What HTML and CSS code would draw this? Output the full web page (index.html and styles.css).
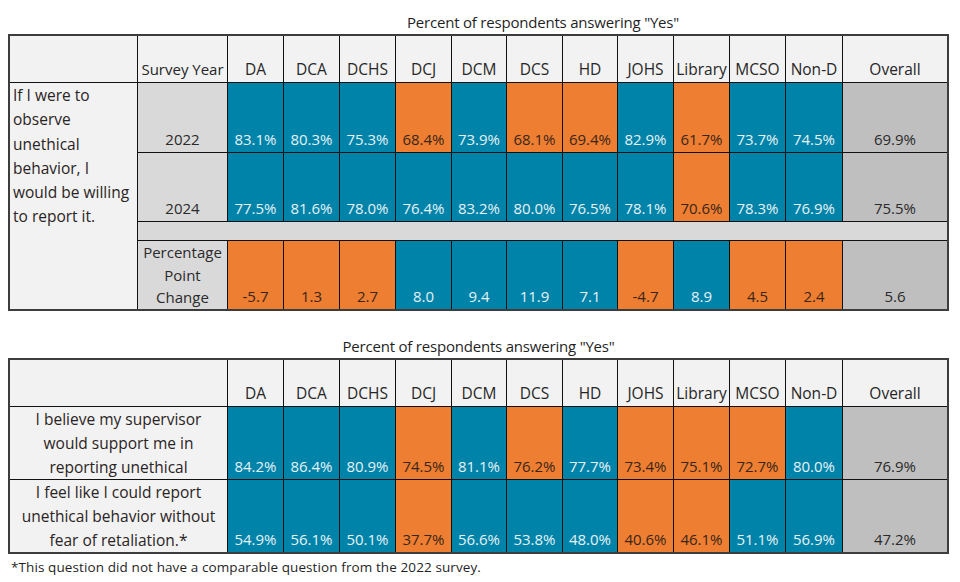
FILE: index.html
```html
<!DOCTYPE html>
<html lang="en">
<head>
<meta charset="utf-8">
<title>Survey results</title>
<link rel="stylesheet" href="styles.css">
</head>
<body>
<div class="page">
  <div class="title title-one">Percent of respondents answering "Yes"</div>
  <div class="grid grid-one">
    <div class="c hd"></div>
    <div class="c hd sy">Survey Year</div>
    <div class="c hd">DA</div>
    <div class="c hd">DCA</div>
    <div class="c hd">DCHS</div>
    <div class="c hd">DCJ</div>
    <div class="c hd">DCM</div>
    <div class="c hd">DCS</div>
    <div class="c hd">HD</div>
    <div class="c hd">JOHS</div>
    <div class="c hd">Library</div>
    <div class="c hd">MCSO</div>
    <div class="c hd">Non-D</div>
    <div class="c hd">Overall</div>

    <div class="c q q-one">If I were to<br>observe<br>unethical<br>behavior, I<br>would be willing<br>to report it.</div>
    <div class="c yr">2022</div>
    <div class="c b">83.1%</div>
    <div class="c b">80.3%</div>
    <div class="c b">75.3%</div>
    <div class="c o">68.4%</div>
    <div class="c b">73.9%</div>
    <div class="c o">68.1%</div>
    <div class="c o">69.4%</div>
    <div class="c b">82.9%</div>
    <div class="c o">61.7%</div>
    <div class="c b">73.7%</div>
    <div class="c b">74.5%</div>
    <div class="c ov">69.9%</div>

    <div class="c yr">2024</div>
    <div class="c b">77.5%</div>
    <div class="c b">81.6%</div>
    <div class="c b">78.0%</div>
    <div class="c b">76.4%</div>
    <div class="c b">83.2%</div>
    <div class="c b">80.0%</div>
    <div class="c b">76.5%</div>
    <div class="c b">78.1%</div>
    <div class="c o">70.6%</div>
    <div class="c b">78.3%</div>
    <div class="c b">76.9%</div>
    <div class="c ov">75.5%</div>

    <div class="c spacer"></div>

    <div class="c yr tri">Percentage<br>Point<br>Change</div>
    <div class="c o">-5.7</div>
    <div class="c o">1.3</div>
    <div class="c o">2.7</div>
    <div class="c b">8.0</div>
    <div class="c b">9.4</div>
    <div class="c b">11.9</div>
    <div class="c b">7.1</div>
    <div class="c o">-4.7</div>
    <div class="c b">8.9</div>
    <div class="c o">4.5</div>
    <div class="c o">2.4</div>
    <div class="c ov">5.6</div>
  </div>

  <div class="title title-two">Percent of respondents answering "Yes"</div>
  <div class="grid grid-two">
    <div class="c hd wide"></div>
    <div class="c hd">DA</div>
    <div class="c hd">DCA</div>
    <div class="c hd">DCHS</div>
    <div class="c hd">DCJ</div>
    <div class="c hd">DCM</div>
    <div class="c hd">DCS</div>
    <div class="c hd">HD</div>
    <div class="c hd">JOHS</div>
    <div class="c hd">Library</div>
    <div class="c hd">MCSO</div>
    <div class="c hd">Non-D</div>
    <div class="c hd">Overall</div>

    <div class="c q q-two wide">I believe my supervisor<br>would support me in<br>reporting unethical</div>
    <div class="c b">84.2%</div>
    <div class="c b">86.4%</div>
    <div class="c b">80.9%</div>
    <div class="c o">74.5%</div>
    <div class="c b">81.1%</div>
    <div class="c o">76.2%</div>
    <div class="c b">77.7%</div>
    <div class="c o">73.4%</div>
    <div class="c o">75.1%</div>
    <div class="c o">72.7%</div>
    <div class="c b">80.0%</div>
    <div class="c ov">76.9%</div>

    <div class="c q q-two wide">I feel like I could report<br>unethical behavior without<br>fear of retaliation.*</div>
    <div class="c b">54.9%</div>
    <div class="c b">56.1%</div>
    <div class="c b">50.1%</div>
    <div class="c o">37.7%</div>
    <div class="c b">56.6%</div>
    <div class="c b">53.8%</div>
    <div class="c b">48.0%</div>
    <div class="c o">40.6%</div>
    <div class="c o">46.1%</div>
    <div class="c b">51.1%</div>
    <div class="c b">56.9%</div>
    <div class="c ov">47.2%</div>
  </div>
  <div class="note">*This question did not have a comparable question from the 2022 survey.</div>
</div>
</body>
</html>
```

FILE: styles.css
```css
html, body {
  margin: 0;
  padding: 0;
  background: #ffffff;
}

.page {
  width: 960px;
  height: 582px;
  padding: 0 0 0 8px;
  box-sizing: border-box;
  font-family: "Open Sans", "Noto Sans", sans-serif;
  font-size: 15px;
  color: #262626;
  overflow: hidden;
}

.title {
  height: 24px;
  line-height: 24px;
  text-align: center;
  font-size: 15px;
  letter-spacing: -0.2px;
  color: #1f1f1f;
  box-sizing: border-box;
}

.title-one {
  margin-top: 10px;
  padding-left: 129px;
  width: 941px;
}

.title-two {
  margin-top: 23px;
  width: 941px;
}

.grid {
  display: grid;
  width: 941px;
  box-sizing: border-box;
  border: 2px solid #3d3d3d;
  background: #111111;
  gap: 1px;
  grid-template-columns: 127px 89px 55px 55px 55px 55px 54px 55px 54px 55px 55px 55px 56px 1fr;
}

.grid-one {
  grid-template-rows: 46px 69px 68px 18px 68px;
}

.grid-two {
  grid-template-rows: 46px 72px 72px;
}

.c {
  display: flex;
  flex-direction: column;
  justify-content: flex-end;
  align-items: center;
  text-align: center;
  line-height: 24px;
  padding-bottom: 1px;
  white-space: nowrap;
  overflow: hidden;
}

.hd {
  background: #f2f2f2;
  color: #262626;
  font-size: 15.5px;
}

.hd.sy {
  font-size: 15px;
}

.wide {
  grid-column: span 2;
}

.q {
  background: #f2f2f2;
  color: #2a2424;
  font-size: 15.5px;
}

.q-one {
  grid-row: span 4;
  justify-content: flex-start;
  align-items: flex-start;
  text-align: left;
  padding: 0 0 0 3px;
  line-height: 24.3px;
}

.q-two {
  line-height: 24px;
  padding-bottom: 0;
}

.yr {
  background: #d9d9d9;
  color: #2a2a2a;
}

.tri {
  font-size: 15px;
  line-height: 22.6px;
  padding-bottom: 0;
}

.spacer {
  grid-column: span 13;
  background: #d9d9d9;
}

.b {
  background: #0083a9;
  color: #e6f2f6;
}

.o {
  background: #ee7e32;
  color: #3a2618;
}

.ov {
  background: #bfbfbf;
  color: #2a2a2a;
}

.note {
  margin-top: 1px;
  padding-left: 3px;
  font-size: 13.5px;
  line-height: 24px;
  letter-spacing: 0.1px;
  color: #1f1f1f;
}
```
